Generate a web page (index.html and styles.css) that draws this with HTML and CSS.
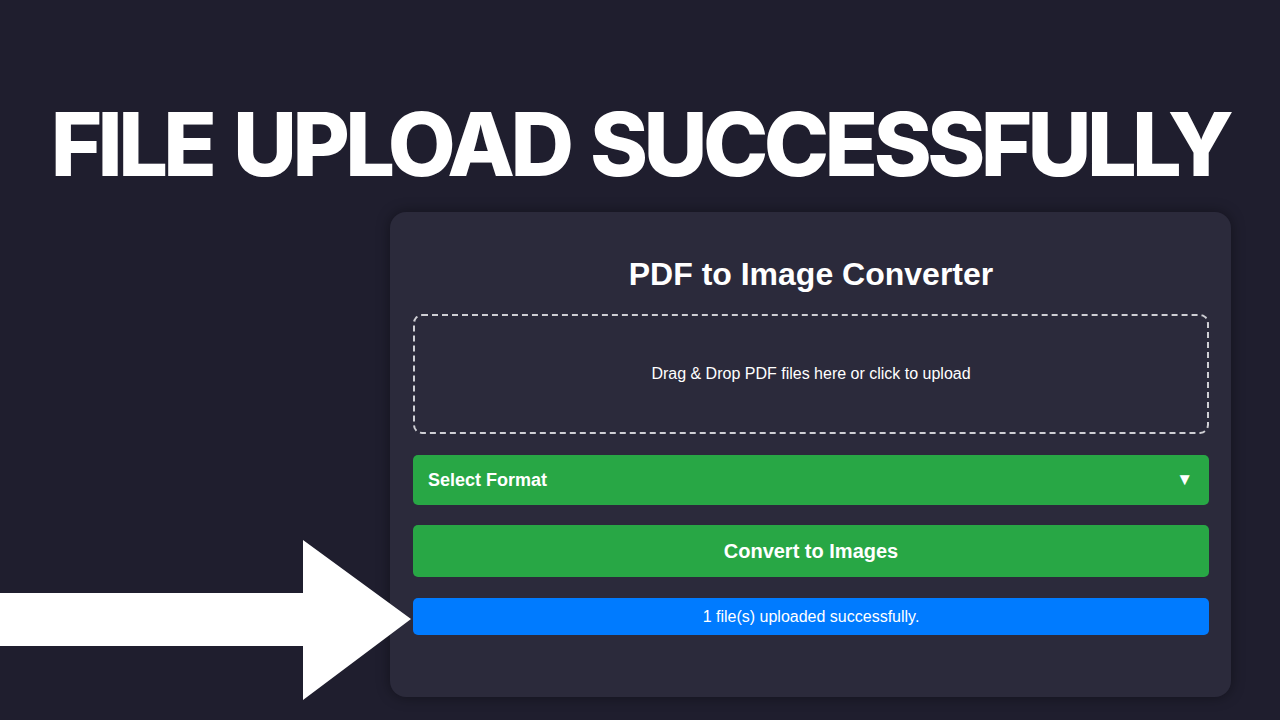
FILE: index.html
```html
<!DOCTYPE html>
<html>
<head>
<meta charset="utf-8">
<link rel="stylesheet" href="styles.css">
</head>
<body>
<div class="page">
  <h1 class="headline">FILE UPLOAD SUCCESSFULLY</h1>
  <div class="stage">
    <div class="card">
      <h2 class="card-title">PDF to Image Converter</h2>
      <div class="dropzone">Drag &amp; Drop PDF files here or click to upload</div>
      <div class="select">
        <span>Select Format</span>
        <span class="caret">&#9660;</span>
      </div>
      <div class="convert">Convert to Images</div>
      <div class="status">1 file(s) uploaded successfully.</div>
    </div>
  </div>
  <svg class="arrow" width="412" height="162" viewBox="0 0 412 162">
    <polygon points="0,53 303,53 303,0 411,79 303,160 303,106 0,106" fill="#ffffff"/>
  </svg>
</div>
</body>
</html>
```
FILE: styles.css
```css
html, body {
  margin: 0;
  padding: 0;
  background: #1f1e2e;
}
.page {
  position: relative;
  width: 1280px;
  height: 720px;
  overflow: hidden;
  background: #1f1e2e;
  font-family: "Liberation Sans", Arial, sans-serif;
}
.headline {
  margin: 0;
  padding-top: 88px;
  height: 124px;
  text-align: center;
  font-family: Inter, sans-serif;
  font-weight: 800;
  font-size: 88px;
  line-height: 112px;
  color: #ffffff;
  letter-spacing: -4.6px;
  word-spacing: 6px;
  white-space: nowrap;
}
.stage {
  display: flex;
  padding-left: 390px;
}
.card {
  width: 796px;
  padding: 30px 22px 62px 23px;
  background: #2b2a3b;
  border-radius: 16px;
  box-shadow: 0 0 14px rgba(0,0,0,0.4);
  display: flex;
  flex-direction: column;
}
.card-title {
  margin: 0 0 8px 0;
  text-align: center;
  color: #ffffff;
  font-size: 32px;
  font-weight: bold;
  line-height: 64px;
}
.dropzone {
  height: 116px;
  border: 2px dashed #cfcfd4;
  border-radius: 9px;
  display: flex;
  align-items: center;
  justify-content: center;
  color: #ffffff;
  font-size: 16px;
}
.select {
  margin-top: 21px;
  height: 50px;
  background: #28a745;
  border-radius: 5px;
  display: flex;
  align-items: center;
  justify-content: space-between;
  padding: 0 16px 0 15px;
  color: #ffffff;
  font-weight: bold;
  font-size: 18px;
}
.caret {
  font-size: 17px;
}
.convert {
  margin-top: 20px;
  height: 52px;
  background: #28a745;
  border-radius: 5px;
  display: flex;
  align-items: center;
  justify-content: center;
  color: #ffffff;
  font-weight: bold;
  font-size: 20px;
}
.status {
  margin-top: 21px;
  height: 37px;
  background: #007bff;
  border-radius: 5px;
  display: flex;
  align-items: center;
  justify-content: center;
  color: #ffffff;
  font-size: 16px;
}
.arrow {
  position: absolute;
  left: 0;
  top: 540px;
}
```
